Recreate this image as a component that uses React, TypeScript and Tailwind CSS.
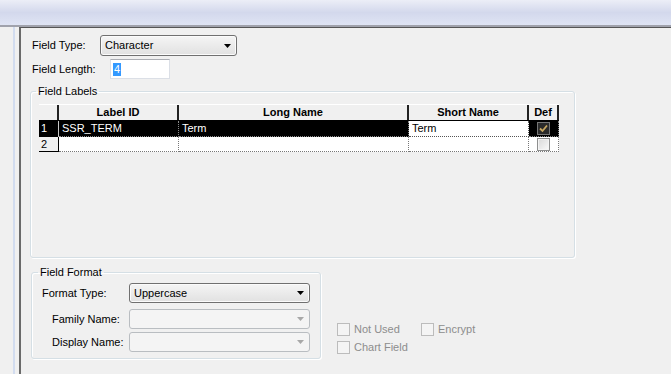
import React from "react";

type ComboProps = {
  value?: string;
  disabled?: boolean;
  width: string;
};

function Arrow({ disabled }: { disabled?: boolean }) {
  return (
    <svg width="7" height="4" viewBox="0 0 7 4" className="shrink-0">
      <polygon points="0,0 7,0 3.5,4" fill={disabled ? "#a8a8a8" : "#000"} />
    </svg>
  );
}

function Combo({ value, disabled, width }: ComboProps) {
  if (disabled) {
    return (
      <div
        className={`${width} h-[20px] flex items-center justify-between pl-[4px] pr-[5px] rounded-[3px] border border-[#b9bdc1] bg-[#f4f4f4]`}
      >
        <span>{value}</span>
        <Arrow disabled />
      </div>
    );
  }
  return (
    <div
      className={`${width} h-[20px] flex items-center justify-between pl-[4px] pr-[5px] rounded-[3px] border border-[#707070] bg-linear-to-b from-[#f5f5f5] to-[#e1e1e1] shadow-[inset_0_0_0_1px_#fbfbfb]`}
    >
      <span>{value}</span>
      <Arrow />
    </div>
  );
}

function CheckBox({ disabled }: { disabled?: boolean }) {
  if (disabled) {
    return <div className="w-[13px] h-[13px] border border-[#bcbcbc] bg-[#f4f4f4] shrink-0" />;
  }
  return (
    <div className="w-[13px] h-[13px] border border-[#8e8f8f] bg-linear-to-br from-[#d8d8d8] to-[#fafafa] shadow-[inset_0_0_0_1px_#f4f4f4] shrink-0" />
  );
}

function CheckedInverted() {
  return (
    <div className="w-[13px] h-[13px] border border-[#777] bg-[#2a2a2a] flex items-center justify-center">
      <svg width="9" height="9" viewBox="0 0 9 9">
        <path d="M1 4.5 L3.5 7 L8 1.5" stroke="#c9a861" strokeWidth="1.8" fill="none" />
      </svg>
    </div>
  );
}

export default function App() {
  return (
    <div className="w-[671px] h-[374px] overflow-hidden bg-[#f0f0f0] font-['Liberation_Sans',Arial,sans-serif] text-[11px] leading-[13px] text-black flex flex-col">
      {/* title strip */}
      <div className="h-[27px] shrink-0 bg-linear-to-b from-[#eceef7] via-[#d3d8ec] to-[#dfe4f4] border-b-2 border-[#a0a2ac]" />

      <div className="flex flex-1 min-h-0">
        <div className="w-[13px] shrink-0" />
        <div className="w-[2px] shrink-0 bg-[#d2dcef]" />
        <div className="w-[4px] shrink-0" />

        <div className="flex-1 border-l-2 border-t border-l-[#6a6a6a] border-t-[#555] pl-[11px] pt-[7px]">
          {/* Field Type */}
          <div className="flex items-center h-[21px]">
            <span className="w-[68px]">Field Type:</span>
            <Combo value="Character" width="w-[137px] h-[21px]" />
          </div>

          {/* Field Length */}
          <div className="flex items-center h-[20px] mt-[3px]">
            <span className="w-[78px]">Field Length:</span>
            <div className="w-[60px] h-[20px] bg-white border border-[#dbdfe6] border-t-[#abadb3] pl-[2px] flex items-center">
              <span className="bg-[#3399ff] text-white px-[1px]">4</span>
            </div>
          </div>

          {/* Field Labels group */}
          <fieldset className="ml-[-2px] mt-[6px] w-[545px] h-[173px] border border-[#d5dfe5] rounded-[3px] shadow-[inset_1px_1px_0_#fff,1px_1px_0_#fff] pl-[8px] pt-[6px]">
            <legend className="ml-[-3px] px-[2px]">Field Labels</legend>

            <div className="w-[520px]">
              <div className="flex h-[17px] border-t border-white border-b border-b-black bg-[#f0f0f0] font-bold">
                <div className="w-[20px] border-r-2 border-[#222]" />
                <div className="w-[120px] border-r-2 border-[#222] text-center leading-[15px]">Label ID</div>
                <div className="w-[230px] border-r-2 border-[#222] text-center leading-[15px]">Long Name</div>
                <div className="w-[120px] border-r-2 border-[#222] text-center leading-[15px]">Short Name</div>
                <div className="w-[30px] border-r-2 border-[#222] text-center leading-[15px]">Def</div>
              </div>

              <div className="flex h-[16px] bg-black text-white">
                <div className="w-[20px] border-r border-[#c8c8c8] pl-[2px] leading-[15px]">1</div>
                <div className="w-[120px] border-r border-b border-dotted border-[#8a8a8a] pl-[3px] leading-[15px]">SSR_TERM</div>
                <div className="w-[230px] border-r border-b border-dotted border-[#8a8a8a] pl-[3px] leading-[15px]">Term</div>
                <div className="w-[120px] border-r border-b border-dotted border-[#555] bg-white text-black pl-[3px] leading-[15px]">Term</div>
                <div className="w-[30px] border-r border-b border-dotted border-[#8a8a8a] flex items-center justify-center">
                  <CheckedInverted />
                </div>
              </div>

              <div className="flex h-[15px]">
                <div className="w-[20px] border-r border-b border-black bg-[#f0f0f0] pl-[2px] leading-[14px]">2</div>
                <div className="w-[120px] border-r border-b border-dotted border-[#777] bg-white" />
                <div className="w-[230px] border-r border-b border-dotted border-[#777] bg-white" />
                <div className="w-[120px] border-r border-b border-dotted border-[#777] bg-white" />
                <div className="w-[30px] border-r border-b border-dotted border-[#777] bg-white flex items-center justify-center">
                  <CheckBox />
                </div>
              </div>
            </div>
          </fieldset>

          {/* Field Format + flags */}
          <div className="flex mt-[8px]">
            <fieldset className="ml-[-1px] w-[290px] border border-[#d5dfe5] rounded-[3px] shadow-[inset_1px_1px_0_#fff,1px_1px_0_#fff] pt-[4px] pb-[6px]">
              <legend className="ml-[6px] px-[2px]">Field Format</legend>

              <div className="flex items-center h-[20px]">
                <span className="w-[97px] pl-[10px]">Format Type:</span>
                <Combo value="Uppercase" width="w-[181px]" />
              </div>
              <div className="flex items-center h-[20px] mt-[6px]">
                <span className="w-[97px] pl-[20px]">Family Name:</span>
                <Combo disabled width="w-[181px]" />
              </div>
              <div className="flex items-center h-[20px] mt-[3px]">
                <span className="w-[97px] pl-[20px]">Display Name:</span>
                <Combo disabled width="w-[181px]" />
              </div>
            </fieldset>

            <div className="ml-[16px] mt-[57px] text-[#8d8d8d]">
              <div className="flex">
                <label className="w-[84px] flex items-center gap-[4px]">
                  <CheckBox disabled />
                  <span>Not Used</span>
                </label>
                <label className="flex items-center gap-[4px]">
                  <CheckBox disabled />
                  <span>Encrypt</span>
                </label>
              </div>
              <label className="flex items-center gap-[4px] mt-[5px]">
                <CheckBox disabled />
                <span>Chart Field</span>
              </label>
            </div>
          </div>
        </div>
      </div>
    </div>
  );
}
